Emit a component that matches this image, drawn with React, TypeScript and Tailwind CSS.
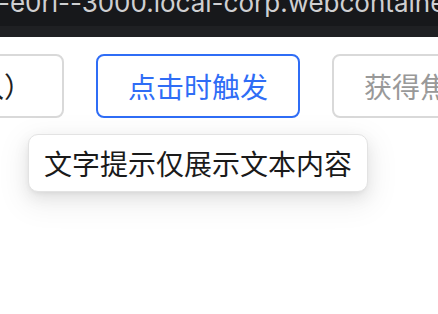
export default function App() {
  const cjk = { fontFamily: '"Noto Sans CJK SC", "PingFang SC", sans-serif' }

  return (
    <div className="w-[438px] h-[314px] bg-white overflow-hidden">
      {/* browser address bar (cut off) */}
      <div className="h-[26px] bg-[#17181b] overflow-hidden">
        <div className="-mt-[10px] -ml-[2px] whitespace-nowrap text-[26px] leading-none text-[#cfcfd1] font-['Inter',sans-serif]">
          -e0ri--3000.local-corp.webcontainer-api.io
        </div>
      </div>
      <div className="h-[11px] bg-[#1f2023]" />

      {/* trigger buttons */}
      <div className="pt-[17px] flex gap-8 -ml-[224px]" style={cjk}>
        <button className="h-16 px-[30px] border-2 border-[#d9d9d9] rounded-lg text-[28px] leading-none text-[#1f1f1f] whitespace-nowrap">
          悬停（鼠标移入）
        </button>

        <div className="relative">
          <button className="h-16 px-[30px] border-2 border-[#2f6df6] rounded-lg text-[28px] leading-none text-[#2f6df6] whitespace-nowrap">
            点击时触发
          </button>
          <div className="absolute left-1/2 top-full mt-4 -translate-x-1/2 whitespace-nowrap bg-white border border-[#e3e3e3] rounded-[10px] px-[15px] py-[12px] text-[28px] leading-[32px] text-[#1a1a1a] shadow-[0_6px_16px_rgba(0,0,0,0.08),0_3px_6px_-4px_rgba(0,0,0,0.12),0_9px_28px_8px_rgba(0,0,0,0.05)]">
            文字提示仅展示文本内容
          </div>
        </div>

        <button className="h-16 px-[30px] border-2 border-[#d9d9d9] rounded-lg text-[28px] leading-none text-[#999999] whitespace-nowrap">
          获得焦点时触发
        </button>
      </div>
    </div>
  )
}
